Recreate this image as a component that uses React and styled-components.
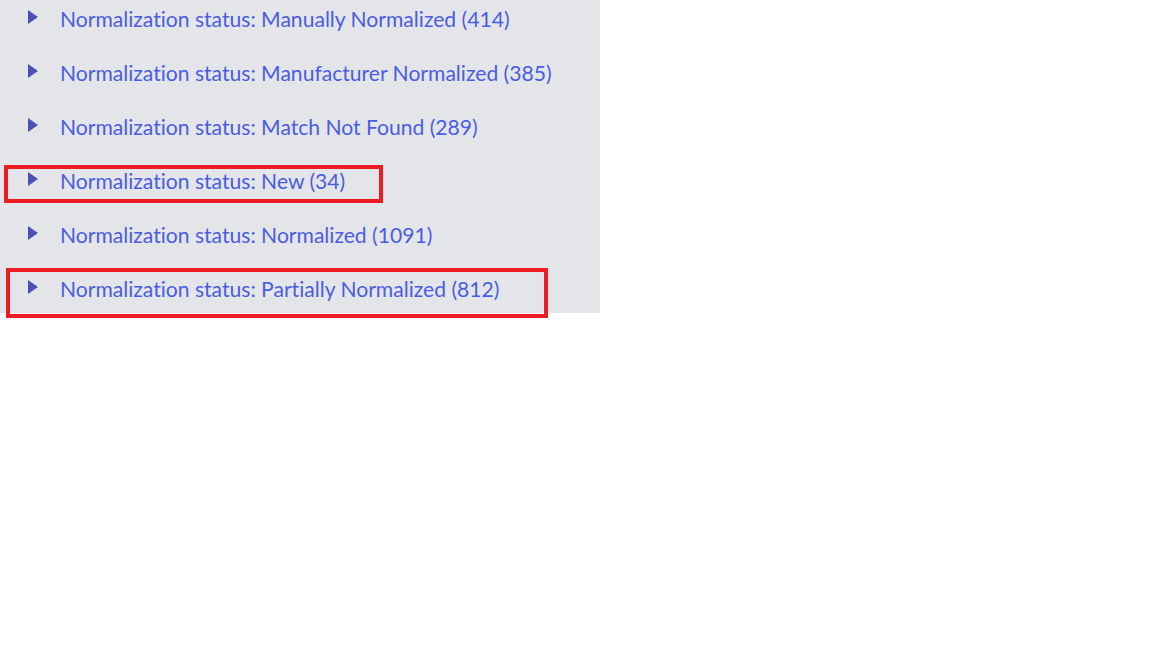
import React from "react"
import styled, { createGlobalStyle } from "styled-components"

const GlobalStyle = createGlobalStyle`
  html, body {
    margin: 0;
    padding: 0;
    background: #ffffff;
    font-family: Lato, "Liberation Sans", sans-serif;
  }
`

const statuses = [
  { label: "Manually Normalized", count: 414 },
  { label: "Manufacturer Normalized", count: 385 },
  { label: "Match Not Found", count: 289 },
  { label: "New", count: 34 },
  { label: "Normalized", count: 1091 },
  { label: "Partially Normalized", count: 812 },
]

const App = () => (
  <Page>
    <GlobalStyle />
    <FacetPanel>
      {statuses.map(s => (
        <FacetRow key={s.label}>
          <Caret />
          <FacetLink href="#">
            Normalization status: {s.label} ({s.count})
          </FacetLink>
        </FacetRow>
      ))}
    </FacetPanel>
    <Highlight $top={165} $left={4} $width={379} $height={38} />
    <Highlight $top={268} $left={6} $width={542} $height={50} />
  </Page>
)

export default App

const Page = styled.div`
  position: relative;
  width: 1152px;
  height: 648px;
  overflow: hidden;
`

const FacetPanel = styled.ul`
  list-style: none;
  margin: -6px 0 0 0;
  padding: 0 0 1px;
  width: 600px;
  background: #e4e5e9;
  display: flex;
  flex-direction: column;
  gap: 6px;
`

const FacetRow = styled.li`
  height: 48px;
  display: flex;
  align-items: center;
  padding-left: 28px;
`

const Caret = styled.span`
  flex: none;
  width: 0;
  height: 0;
  border-top: 7px solid transparent;
  border-bottom: 7px solid transparent;
  border-left: 10px solid #4b4fb8;
  margin-right: 22px;
  margin-top: -2px;
`

const FacetLink = styled.a`
  color: #4a5de2;
  font-size: 21.1px;
  font-feature-settings: "liga" 0;
  font-variant-ligatures: none;
  text-decoration: none;
  white-space: nowrap;
`

const Highlight = styled.div`
  position: absolute;
  top: ${p => p.$top}px;
  left: ${p => p.$left}px;
  width: ${p => p.$width}px;
  height: ${p => p.$height}px;
  box-sizing: border-box;
  border: 4px solid #ed1c24;
  pointer-events: none;
`
